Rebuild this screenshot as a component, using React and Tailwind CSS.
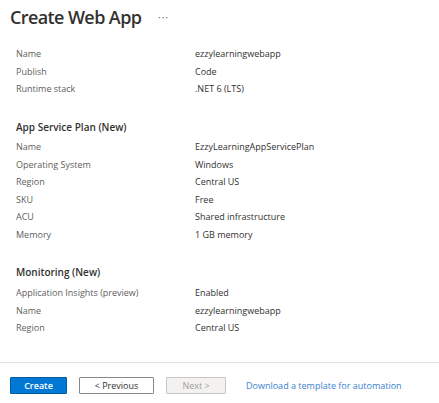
import React from "react";

const font = { fontFamily: '"Open Sans", "Noto Sans", sans-serif' };

function Row({ label, value }) {
  return (
    <div className="grid h-[17.5px] grid-cols-[179px_1fr] items-center text-[9px] leading-[17.5px]">
      <div className="text-[#605e5c]">{label}</div>
      <div className="text-[#323130]">{value}</div>
    </div>
  );
}

function Heading({ children }) {
  return (
    <div className="h-[18px] text-[10px] font-semibold leading-[18px] text-[#323130]">
      {children}
    </div>
  );
}

export default function App() {
  return (
    <div className="relative h-[403px] w-[439px] overflow-hidden bg-white" style={font}>
      <div className="flex h-[31px] items-center pl-[10px] pt-[3px]">
        <h1 className="w-[148px] text-[18px] font-semibold leading-[28px] tracking-[-0.6px] text-[#323130]">
          Create Web App
        </h1>
        <span className="text-[10px] leading-none tracking-[1px] text-[#605e5c]">···</span>
      </div>

      <div className="mt-[14px] pl-[16px]">
        <Row label="Name" value="ezzylearningwebapp" />
        <Row label="Publish" value="Code" />
        <Row label="Runtime stack" value=".NET 6 (LTS)" />

        <div className="mt-[20px]">
          <Heading>App Service Plan (New)</Heading>
        </div>
        <div className="mt-[2.5px]">
          <Row label="Name" value="EzzyLearningAppServicePlan" />
          <Row label="Operating System" value="Windows" />
          <Row label="Region" value="Central US" />
          <Row label="SKU" value="Free" />
          <Row label="ACU" value="Shared infrastructure" />
          <Row label="Memory" value="1 GB memory" />
        </div>

        <div className="mt-[20px]">
          <Heading>Monitoring (New)</Heading>
        </div>
        <div className="mt-[3px]">
          <Row label="Application Insights (preview)" value="Enabled" />
          <Row label="Name" value="ezzylearningwebapp" />
          <Row label="Region" value="Central US" />
        </div>
      </div>

      <div className="absolute left-0 right-0 top-[362px] border-t border-[#e1dfdd]" />

      <div className="absolute left-0 right-0 top-[377px] flex items-center pl-[10px] text-[9px]">
        <button className="h-[17px] w-[57px] rounded-[1px] border border-[#005a9e] bg-[#0078d4] font-semibold text-white">
          Create
        </button>
        <button className="ml-[12px] h-[17px] w-[75px] rounded-[1px] border border-[#8a8886] bg-white text-[#323130]">
          &lt; Previous
        </button>
        <button className="ml-[12px] h-[17px] w-[60px] rounded-[1px] border border-[#c8c6c4] bg-[#f3f2f1] text-[#a19f9d]">
          Next &gt;
        </button>
        <a className="ml-[20px] text-[#3a7fcf]">Download a template for automation</a>
      </div>
    </div>
  );
}
